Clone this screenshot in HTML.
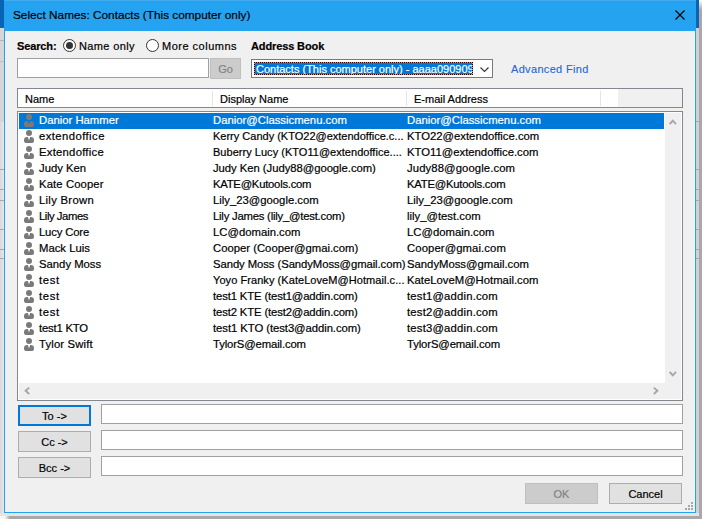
<!DOCTYPE html>
<html><head><meta charset="utf-8"><style>
*{margin:0;padding:0;box-sizing:border-box}
html,body{width:702px;height:519px;overflow:hidden;background:#a6a6a6;font-family:"Liberation Sans",sans-serif;font-size:11px;color:#000;-webkit-text-stroke:0.2px}
.a{position:absolute}
.t{position:absolute;white-space:nowrap;line-height:16px}
#win{position:absolute;left:4px;top:0;width:692px;height:513px;background:#f0f0f0;border:1px solid #24a1ef}
#title{position:absolute;left:4px;top:0;width:692px;height:31px;background:#25a3f0}
.radio{position:absolute;width:13px;height:13px;border:1px solid #333;border-radius:50%;background:#fff}
.radio.on::after{content:"";position:absolute;left:2px;top:2px;width:7px;height:7px;border-radius:50%;background:#333}
.box{position:absolute;background:#fff;border:1px solid #7a7a7a}
.btn{position:absolute;background:#e1e1e1;border:1px solid #adadad;text-align:center;line-height:21px}
.btn.dis{background:#cccccc;border-color:#bfbfbf;color:#838383}
.row{position:absolute;left:19px;width:645px;height:16px;line-height:16px;white-space:nowrap;font-size:11.3px}
.row.sel{background:#0078d7;color:#fff}
.row .ic{position:absolute;left:5px;top:1px}
.row span{position:absolute;top:-1px}
.c1{left:20px} .c2{left:194px} .c3{left:388px}
</style></head><body>
<div class="a" style="left:0;top:0;width:4px;height:28px;background:#0865b3"></div>
<div class="a" style="left:0;top:28px;width:4px;height:491px;background:linear-gradient(to right,#d8d8d8,#e8e8e8)"></div><div class="a" style="left:0;top:28px;width:4px;height:94px;background:#d6d6d6"></div><div class="a" style="left:0;top:40px;width:4px;height:1px;background:#b4b4b4"></div><div class="a" style="left:0;top:61px;width:4px;height:1px;background:#c0c0c0"></div>
<div class="a" style="left:696px;top:0;width:3px;height:28px;background:#0865b3"></div>
<div class="a" style="left:699px;top:0;width:3px;height:519px;background:linear-gradient(#fff,#a8a8a8 10px)"></div>
<div class="a" style="left:696px;top:28px;width:3px;height:491px;background:#d0d0d0"></div>
<div class="a" style="left:0;top:513px;width:699px;height:3px;background:#e4e4e4"></div>
<div class="a" style="left:0;top:516px;width:699px;height:3px;background:linear-gradient(to right,#f5f5f5 0px,#f5f5f5 5px,#a8a8a8 10px)"></div>
<div class="a" style="left:0;top:169px;width:4px;height:1px;background:#a8a8a8"></div><div class="a" style="left:696px;top:169px;width:3px;height:1px;background:#a8a8a8"></div><div class="a" style="left:0;top:189px;width:4px;height:1px;background:#a8a8a8"></div><div class="a" style="left:696px;top:189px;width:3px;height:1px;background:#a8a8a8"></div><div class="a" style="left:0;top:200px;width:4px;height:1px;background:#a8a8a8"></div><div class="a" style="left:696px;top:200px;width:3px;height:1px;background:#a8a8a8"></div><div class="a" style="left:0;top:229px;width:4px;height:1px;background:#a8a8a8"></div><div class="a" style="left:696px;top:229px;width:3px;height:1px;background:#a8a8a8"></div><div class="a" style="left:0;top:249px;width:4px;height:1px;background:#a8a8a8"></div><div class="a" style="left:696px;top:249px;width:3px;height:1px;background:#a8a8a8"></div><div class="a" style="left:0;top:258px;width:4px;height:1px;background:#a8a8a8"></div><div class="a" style="left:696px;top:258px;width:3px;height:1px;background:#a8a8a8"></div><div class="a" style="left:696px;top:121px;width:3px;height:1px;background:#a8a8a8"></div>
<div id="win"></div>
<div id="title"></div>
<div class="a" style="left:4px;top:0;width:692px;height:1px;background:#42abee"></div>
<div class="t" style="left:13px;top:7px;font-size:11.8px;color:#000">Select Names: Contacts (This computer only)</div>
<svg class="a" style="left:675px;top:10px" width="10" height="10" viewBox="0 0 10 10"><path d="M0.5 0.5 L9.5 9.5 M9.5 0.5 L0.5 9.5" stroke="#000" stroke-width="1.2"/></svg>

<div class="t" style="left:17px;top:38px;font-weight:bold;letter-spacing:-0.12px">Search:</div>
<div class="radio on" style="left:63px;top:39px"></div>
<div class="t" style="left:79px;top:38px;letter-spacing:0.38px">Name only</div>
<div class="radio" style="left:146px;top:39px"></div>
<div class="t" style="left:162px;top:38px;letter-spacing:0.5px">More columns</div>
<div class="t" style="left:251px;top:38px;font-weight:bold;letter-spacing:-0.12px">Address Book</div>

<div class="box" style="left:17px;top:58px;width:192px;height:20px;border-color:#a0a0a0"></div>
<div class="btn dis" style="left:210px;top:58px;width:31px;height:21px">Go</div>
<div class="box" style="left:251px;top:59px;width:242px;height:19px;border-color:#7a7a7a"></div>
<div class="a" style="left:254px;top:62px;width:219px;height:13px;background:#ff8a2a"><div class="a" style="left:0;top:0;width:219px;height:13px;border:1px dotted #000;background:#0078d7;background-clip:padding-box;overflow:hidden"><div class="t" style="left:1px;top:-2px;color:#fff">Contacts (This computer only) - aaaa090909</div></div></div>
<svg class="a" style="left:480px;top:67px" width="9" height="6" viewBox="0 0 9 6"><path d="M0.5 0.5 L4.5 4.5 L8.5 0.5" stroke="#333" fill="none" stroke-width="1.1"/></svg>
<div class="t" style="left:511px;top:61px;color:#2366d1;letter-spacing:0.33px;-webkit-text-stroke:0.1px">Advanced Find</div>

<div class="box" style="left:17px;top:88px;width:666px;height:20px;border-color:#828790"></div>
<div class="a" style="left:618px;top:89px;width:64px;height:18px;background:#f0f0f0"></div>
<div class="a" style="left:212px;top:91px;width:1px;height:15px;background:#e5e5e5"></div>
<div class="a" style="left:406px;top:91px;width:1px;height:15px;background:#e5e5e5"></div>
<div class="a" style="left:600px;top:91px;width:1px;height:15px;background:#e5e5e5"></div>
<div class="t" style="left:25px;top:91px">Name</div>
<div class="t" style="left:220px;top:91px">Display Name</div>
<div class="t" style="left:414px;top:91px">E-mail Address</div>

<div class="box" style="left:17px;top:111px;width:666px;height:290px;border-color:#828790"></div>
<div class="a" style="left:665px;top:113px;width:16px;height:270px;background:#f0f0f0"></div>
<div class="a" style="left:19px;top:383px;width:662px;height:16px;background:#f0f0f0"></div>
<svg class="a" style="left:668px;top:118px" width="10" height="8" viewBox="0 0 10 8"><path d="M1.6 6.2 L4.8 2.6 L8 6.2" stroke="#a6a6a6" fill="none" stroke-width="1.9"/></svg>
<svg class="a" style="left:668px;top:370px" width="10" height="8" viewBox="0 0 10 8"><path d="M1.6 1.8 L4.8 5.4 L8 1.8" stroke="#a6a6a6" fill="none" stroke-width="1.9"/></svg>
<svg class="a" style="left:23px;top:386px" width="8" height="10" viewBox="0 0 8 10"><path d="M6.2 1.6 L2.6 4.8 L6.2 8" stroke="#a6a6a6" fill="none" stroke-width="1.9"/></svg>
<svg class="a" style="left:652px;top:386px" width="8" height="10" viewBox="0 0 8 10"><path d="M1.8 1.6 L5.4 4.8 L1.8 8" stroke="#a6a6a6" fill="none" stroke-width="1.9"/></svg>
<div class="row sel" style="top:113px"><svg class="ic" width="12" height="14" viewBox="0 0 12 14"><circle cx="5" cy="3" r="3" fill="#7a7a7a"/><path d="M0 11 L0 10.2 Q0 7 3.2 7 L3.8 7 L5 10.2 L6.2 7 L6.8 7 Q10 7 10 10.2 L10 11 Q10 13 8 13 L2 13 Q0 13 0 11 Z" fill="#7a7a7a"/></svg><span class="c1" style="">Danior Hammer</span><span class="c2" style="">Danior@Classicmenu.com</span><span class="c3" style="">Danior@Classicmenu.com</span></div>
<div class="row" style="top:129px"><svg class="ic" width="12" height="14" viewBox="0 0 12 14"><circle cx="5" cy="3" r="3" fill="#7a7a7a"/><path d="M0 11 L0 10.2 Q0 7 3.2 7 L3.8 7 L5 10.2 L6.2 7 L6.8 7 Q10 7 10 10.2 L10 11 Q10 13 8 13 L2 13 Q0 13 0 11 Z" fill="#7a7a7a"/></svg><span class="c1" style="letter-spacing:0.427px;">extendoffice</span><span class="c2" style="font-size:11px;">Kerry Candy (KTO22@extendoffice.c...</span><span class="c3" style="">KTO22@extendoffice.com</span></div>
<div class="row" style="top:145px"><svg class="ic" width="12" height="14" viewBox="0 0 12 14"><circle cx="5" cy="3" r="3" fill="#7a7a7a"/><path d="M0 11 L0 10.2 Q0 7 3.2 7 L3.8 7 L5 10.2 L6.2 7 L6.8 7 Q10 7 10 10.2 L10 11 Q10 13 8 13 L2 13 Q0 13 0 11 Z" fill="#7a7a7a"/></svg><span class="c1" style="letter-spacing:0.245px;">Extendoffice</span><span class="c2" style="font-size:11px;letter-spacing:0.029px;">Buberry Lucy (KTO11@extendoffice....</span><span class="c3" style="">KTO11@extendoffice.com</span></div>
<div class="row" style="top:161px"><svg class="ic" width="12" height="14" viewBox="0 0 12 14"><circle cx="5" cy="3" r="3" fill="#7a7a7a"/><path d="M0 11 L0 10.2 Q0 7 3.2 7 L3.8 7 L5 10.2 L6.2 7 L6.8 7 Q10 7 10 10.2 L10 11 Q10 13 8 13 L2 13 Q0 13 0 11 Z" fill="#7a7a7a"/></svg><span class="c1" style="">Judy Ken</span><span class="c2" style="letter-spacing:-0.044px;">Judy Ken (Judy88@google.com)</span><span class="c3" style="letter-spacing:0.106px;">Judy88@google.com</span></div>
<div class="row" style="top:177px"><svg class="ic" width="12" height="14" viewBox="0 0 12 14"><circle cx="5" cy="3" r="3" fill="#7a7a7a"/><path d="M0 11 L0 10.2 Q0 7 3.2 7 L3.8 7 L5 10.2 L6.2 7 L6.8 7 Q10 7 10 10.2 L10 11 Q10 13 8 13 L2 13 Q0 13 0 11 Z" fill="#7a7a7a"/></svg><span class="c1" style="letter-spacing:0.100px;">Kate Cooper</span><span class="c2" style="letter-spacing:-0.253px;">KATE@Kutools.com</span><span class="c3" style="letter-spacing:-0.240px;">KATE@Kutools.com</span></div>
<div class="row" style="top:193px"><svg class="ic" width="12" height="14" viewBox="0 0 12 14"><circle cx="5" cy="3" r="3" fill="#7a7a7a"/><path d="M0 11 L0 10.2 Q0 7 3.2 7 L3.8 7 L5 10.2 L6.2 7 L6.8 7 Q10 7 10 10.2 L10 11 Q10 13 8 13 L2 13 Q0 13 0 11 Z" fill="#7a7a7a"/></svg><span class="c1" style="letter-spacing:0.289px;">Lily Brown</span><span class="c2" style="">Lily_23@google.com</span><span class="c3" style="">Lily_23@google.com</span></div>
<div class="row" style="top:209px"><svg class="ic" width="12" height="14" viewBox="0 0 12 14"><circle cx="5" cy="3" r="3" fill="#7a7a7a"/><path d="M0 11 L0 10.2 Q0 7 3.2 7 L3.8 7 L5 10.2 L6.2 7 L6.8 7 Q10 7 10 10.2 L10 11 Q10 13 8 13 L2 13 Q0 13 0 11 Z" fill="#7a7a7a"/></svg><span class="c1" style="letter-spacing:-0.444px;">Lily James</span><span class="c2" style="letter-spacing:-0.219px;">Lily James (lily_@test.com)</span><span class="c3" style="">lily_@test.com</span></div>
<div class="row" style="top:225px"><svg class="ic" width="12" height="14" viewBox="0 0 12 14"><circle cx="5" cy="3" r="3" fill="#7a7a7a"/><path d="M0 11 L0 10.2 Q0 7 3.2 7 L3.8 7 L5 10.2 L6.2 7 L6.8 7 Q10 7 10 10.2 L10 11 Q10 13 8 13 L2 13 Q0 13 0 11 Z" fill="#7a7a7a"/></svg><span class="c1" style="letter-spacing:-0.162px;">Lucy Core</span><span class="c2" style="">LC@domain.com</span><span class="c3" style="">LC@domain.com</span></div>
<div class="row" style="top:241px"><svg class="ic" width="12" height="14" viewBox="0 0 12 14"><circle cx="5" cy="3" r="3" fill="#7a7a7a"/><path d="M0 11 L0 10.2 Q0 7 3.2 7 L3.8 7 L5 10.2 L6.2 7 L6.8 7 Q10 7 10 10.2 L10 11 Q10 13 8 13 L2 13 Q0 13 0 11 Z" fill="#7a7a7a"/></svg><span class="c1" style="">Mack Luis</span><span class="c2" style="">Cooper (Cooper@gmai.com)</span><span class="c3" style="letter-spacing:0.100px;">Cooper@gmai.com</span></div>
<div class="row" style="top:257px"><svg class="ic" width="12" height="14" viewBox="0 0 12 14"><circle cx="5" cy="3" r="3" fill="#7a7a7a"/><path d="M0 11 L0 10.2 Q0 7 3.2 7 L3.8 7 L5 10.2 L6.2 7 L6.8 7 Q10 7 10 10.2 L10 11 Q10 13 8 13 L2 13 Q0 13 0 11 Z" fill="#7a7a7a"/></svg><span class="c1" style="">Sandy Moss</span><span class="c2" style="letter-spacing:-0.074px;">Sandy Moss (SandyMoss@gmail.com)</span><span class="c3" style="">SandyMoss@gmail.com</span></div>
<div class="row" style="top:273px"><svg class="ic" width="12" height="14" viewBox="0 0 12 14"><circle cx="5" cy="3" r="3" fill="#7a7a7a"/><path d="M0 11 L0 10.2 Q0 7 3.2 7 L3.8 7 L5 10.2 L6.2 7 L6.8 7 Q10 7 10 10.2 L10 11 Q10 13 8 13 L2 13 Q0 13 0 11 Z" fill="#7a7a7a"/></svg><span class="c1" style="letter-spacing:0.667px;">test</span><span class="c2" style="font-size:11px;letter-spacing:0.065px;">Yoyo Franky (KateLoveM@Hotmail.c...</span><span class="c3" style="">KateLoveM@Hotmail.com</span></div>
<div class="row" style="top:289px"><svg class="ic" width="12" height="14" viewBox="0 0 12 14"><circle cx="5" cy="3" r="3" fill="#7a7a7a"/><path d="M0 11 L0 10.2 Q0 7 3.2 7 L3.8 7 L5 10.2 L6.2 7 L6.8 7 Q10 7 10 10.2 L10 11 Q10 13 8 13 L2 13 Q0 13 0 11 Z" fill="#7a7a7a"/></svg><span class="c1" style="letter-spacing:0.667px;">test</span><span class="c2" style="letter-spacing:-0.135px;">test1 KTE (test1@addin.com)</span><span class="c3" style="letter-spacing:0.186px;">test1@addin.com</span></div>
<div class="row" style="top:305px"><svg class="ic" width="12" height="14" viewBox="0 0 12 14"><circle cx="5" cy="3" r="3" fill="#7a7a7a"/><path d="M0 11 L0 10.2 Q0 7 3.2 7 L3.8 7 L5 10.2 L6.2 7 L6.8 7 Q10 7 10 10.2 L10 11 Q10 13 8 13 L2 13 Q0 13 0 11 Z" fill="#7a7a7a"/></svg><span class="c1" style="letter-spacing:0.667px;">test</span><span class="c2" style="letter-spacing:-0.135px;">test2 KTE (test2@addin.com)</span><span class="c3" style="letter-spacing:0.186px;">test2@addin.com</span></div>
<div class="row" style="top:321px"><svg class="ic" width="12" height="14" viewBox="0 0 12 14"><circle cx="5" cy="3" r="3" fill="#7a7a7a"/><path d="M0 11 L0 10.2 Q0 7 3.2 7 L3.8 7 L5 10.2 L6.2 7 L6.8 7 Q10 7 10 10.2 L10 11 Q10 13 8 13 L2 13 Q0 13 0 11 Z" fill="#7a7a7a"/></svg><span class="c1" style="letter-spacing:-0.188px;">test1 KTO</span><span class="c2" style="letter-spacing:-0.058px;">test1 KTO (test3@addin.com)</span><span class="c3" style="letter-spacing:0.186px;">test3@addin.com</span></div>
<div class="row" style="top:337px"><svg class="ic" width="12" height="14" viewBox="0 0 12 14"><circle cx="5" cy="3" r="3" fill="#7a7a7a"/><path d="M0 11 L0 10.2 Q0 7 3.2 7 L3.8 7 L5 10.2 L6.2 7 L6.8 7 Q10 7 10 10.2 L10 11 Q10 13 8 13 L2 13 Q0 13 0 11 Z" fill="#7a7a7a"/></svg><span class="c1" style="letter-spacing:0.160px;">Tylor Swift</span><span class="c2" style="letter-spacing:-0.133px;">TylorS@email.com</span><span class="c3" style="letter-spacing:-0.120px;">TylorS@email.com</span></div>

<div class="btn" style="left:18px;top:405px;width:73px;height:21px;border:2px solid #0078d7;line-height:19px">To -&gt;</div>
<div class="btn" style="left:18px;top:431px;width:73px;height:21px">Cc -&gt;</div>
<div class="btn" style="left:18px;top:457px;width:73px;height:21px">Bcc -&gt;</div>
<div class="box" style="left:101px;top:404px;width:582px;height:20px;border-color:#a0a0a0"></div>
<div class="box" style="left:101px;top:430px;width:582px;height:20px;border-color:#a0a0a0"></div>
<div class="box" style="left:101px;top:456px;width:582px;height:20px;border-color:#a0a0a0"></div>

<div class="btn dis" style="left:525px;top:483px;width:73px;height:21px">OK</div>
<div class="btn" style="left:609px;top:483px;width:73px;height:21px">Cancel</div>
<svg class="a" style="left:685px;top:502px" width="8" height="8"><rect x="6" y="0" width="2" height="2" fill="#a8a8a8"/><rect x="3" y="3" width="2" height="2" fill="#a8a8a8"/><rect x="6" y="3" width="2" height="2" fill="#a8a8a8"/><rect x="0" y="6" width="2" height="2" fill="#a8a8a8"/><rect x="3" y="6" width="2" height="2" fill="#a8a8a8"/><rect x="6" y="6" width="2" height="2" fill="#a8a8a8"/></svg>
</body></html>
